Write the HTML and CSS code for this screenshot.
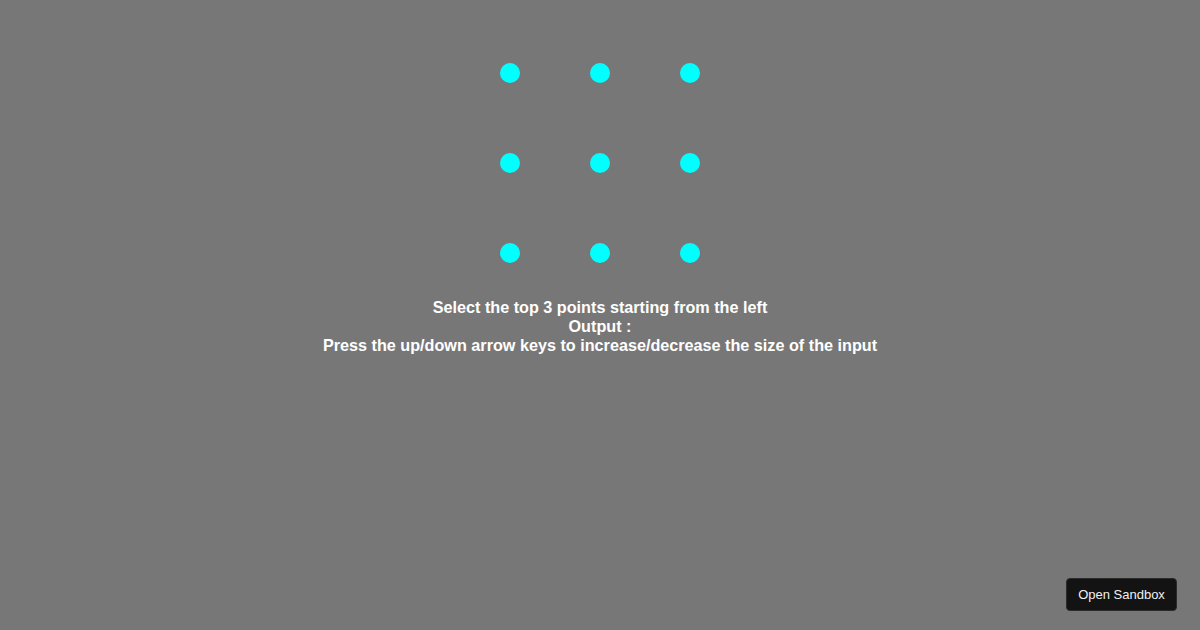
FILE: index.html
```html
<!DOCTYPE html>
<html>
<head>
<meta charset="utf-8">
<link rel="stylesheet" href="styles.css">
</head>
<body>
<div class="app">
  <div class="grid">
    <span class="dot"></span><span class="dot"></span><span class="dot"></span>
    <span class="dot"></span><span class="dot"></span><span class="dot"></span>
    <span class="dot"></span><span class="dot"></span><span class="dot"></span>
  </div>
  <div class="info">
    <div>Select the top 3 points starting from the left</div>
    <div>Output :</div>
    <div>Press the up/down arrow keys to increase/decrease the size of the input</div>
  </div>
</div>
<a class="sandbox">Open Sandbox</a>
</body>
</html>
```
FILE: styles.css
```css
html, body {
  margin: 0;
  height: 100%;
  background: #777777;
}
body {
  font-family: "Liberation Sans", Arial, sans-serif;
}
.app {
  padding-top: 63px;
  display: flex;
  flex-direction: column;
  align-items: center;
}
.grid {
  display: grid;
  grid-template-columns: repeat(3, 20px);
  grid-auto-rows: 20px;
  gap: 70px;
}
.dot {
  width: 20px;
  height: 20px;
  border-radius: 50%;
  background: #00ffff;
}
.info {
  margin-top: 35px;
  color: #ffffff;
  font-weight: bold;
  font-size: 16.2px;
  line-height: 19px;
  text-align: center;
}
.sandbox {
  position: fixed;
  right: 23px;
  bottom: 19px;
  width: 111px;
  height: 33px;
  box-sizing: border-box;
  background: #131313;
  border: 1px solid #2b2b2b;
  border-radius: 4px;
  color: #f0f0f0;
  font-size: 13px;
  display: flex;
  align-items: center;
  justify-content: center;
}
```
